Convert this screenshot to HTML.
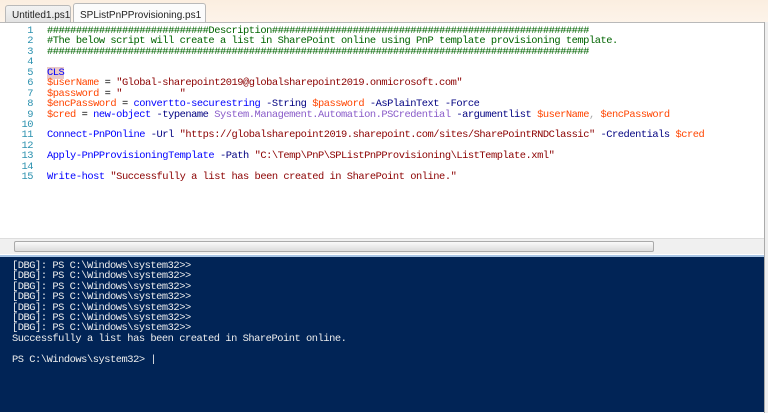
<!DOCTYPE html>
<html><head><meta charset="utf-8"><style>
*{margin:0;padding:0;box-sizing:border-box}
body{width:768px;height:413px;overflow:hidden;background:#fff;position:relative;font-family:"Liberation Sans",sans-serif}
.top{position:absolute;left:0;top:0;width:768px;height:23px;background:linear-gradient(#fbeee0,#fdf4ea)}
.tab{position:absolute;font-size:10px;color:#222;border:1px solid #b9b9b9;border-bottom:none;border-radius:3px 3px 0 0;padding:4px 5px 0 6px}
.t1{left:5px;top:5px;width:66px;height:18px;background:linear-gradient(#f2f2f2,#e2e2e2)}
.t2{left:73px;top:3px;width:133px;height:20px;background:#fbfbfb;padding-top:6px;padding-left:6px}
.editor{position:absolute;left:0;top:22px;width:764px;height:216px;border-top:1px solid #b9b9b9;background:#fff}
pre{font-family:"Liberation Mono",monospace;font-size:10.4px;letter-spacing:-0.47px;line-height:10.43px;position:absolute}
.ln{left:0;top:3px;width:33px;text-align:right;color:#2b91af}
.code{left:47px;top:3px;color:#000}
.c{color:#006400}.v{color:#ff4500}.k{color:#0000ff}.s{color:#8b0000}.p{color:#000080}.t{color:#8a5cc9}.o{color:#a9a9a9}
.hs{position:absolute;left:0;top:238px;width:764px;height:16px;background:#f0f0f0;border-top:1px solid #ddd}
.thumb{position:absolute;left:14px;top:2px;width:640px;height:11px;background:linear-gradient(#fafafa,#dcdcdc);border:1px solid #aaa;border-radius:2px}
.con{position:absolute;left:0;top:255px;width:764px;height:157px;background:#012456;border-top:2px solid #a9c6e6}
.con pre{left:12px;top:4px;color:#eee;line-height:10.4px}
.vr{position:absolute;left:764px;top:22px;width:4px;height:391px;background:#eee;border-left:1px solid #aaa}
</style></head><body>
<div class="top"></div>
<div class="tab t1">Untitled1.ps1</div>
<div class="tab t2">SPListPnPProvisioning.ps1 &nbsp;<span style="font-size:11px">✕</span></div>
<div class="editor">
<pre class="ln">1
2
3
4
5
6
7
8
9
10
11
12
13
14
15</pre>
<pre class="code"><span class="c">############################Description#######################################################
#The below script will create a list in SharePoint online using PnP template provisioning template.
##############################################################################################</span>

<span class="k" style="background:#e8c8c8">CLS</span>
<span class="v">$userName</span> = <span class="s">"Global-sharepoint2019@globalsharepoint2019.onmicrosoft.com"</span>
<span class="v">$password</span> = <span class="s">"          "</span>
<span class="v">$encPassword</span> = <span class="k">convertto-securestring</span> <span class="p">-String</span> <span class="v">$password</span> <span class="p">-AsPlainText</span> <span class="p">-Force</span>
<span class="v">$cred</span> = <span class="k">new-object</span> <span class="p">-typename</span> <span class="t">System.Management.Automation.PSCredential</span> <span class="p">-argumentlist</span> <span class="v">$userName</span><span class="o">,</span> <span class="v">$encPassword</span>

<span class="k">Connect-PnPOnline</span> <span class="p">-Url</span> <span class="s">"https://globalsharepoint2019.sharepoint.com/sites/SharePointRNDClassic"</span> <span class="p">-Credentials</span> <span class="v">$cred</span>

<span class="k">Apply-PnPProvisioningTemplate</span> <span class="p">-Path</span> <span class="s">"C:\Temp\PnP\SPListPnPProvisioning\ListTemplate.xml"</span>

<span class="k">Write-host</span> <span class="s">"Successfully a list has been created in SharePoint online."</span></pre>
</div>
<div class="hs"><div class="thumb"></div></div>
<div class="con"><pre>[DBG]: PS C:\Windows\system32&gt;&gt;
[DBG]: PS C:\Windows\system32&gt;&gt;
[DBG]: PS C:\Windows\system32&gt;&gt;
[DBG]: PS C:\Windows\system32&gt;&gt;
[DBG]: PS C:\Windows\system32&gt;&gt;
[DBG]: PS C:\Windows\system32&gt;&gt;
[DBG]: PS C:\Windows\system32&gt;&gt;
Successfully a list has been created in SharePoint online.

PS C:\Windows\system32&gt; |</pre></div>
<div class="vr"></div>
</body></html>
